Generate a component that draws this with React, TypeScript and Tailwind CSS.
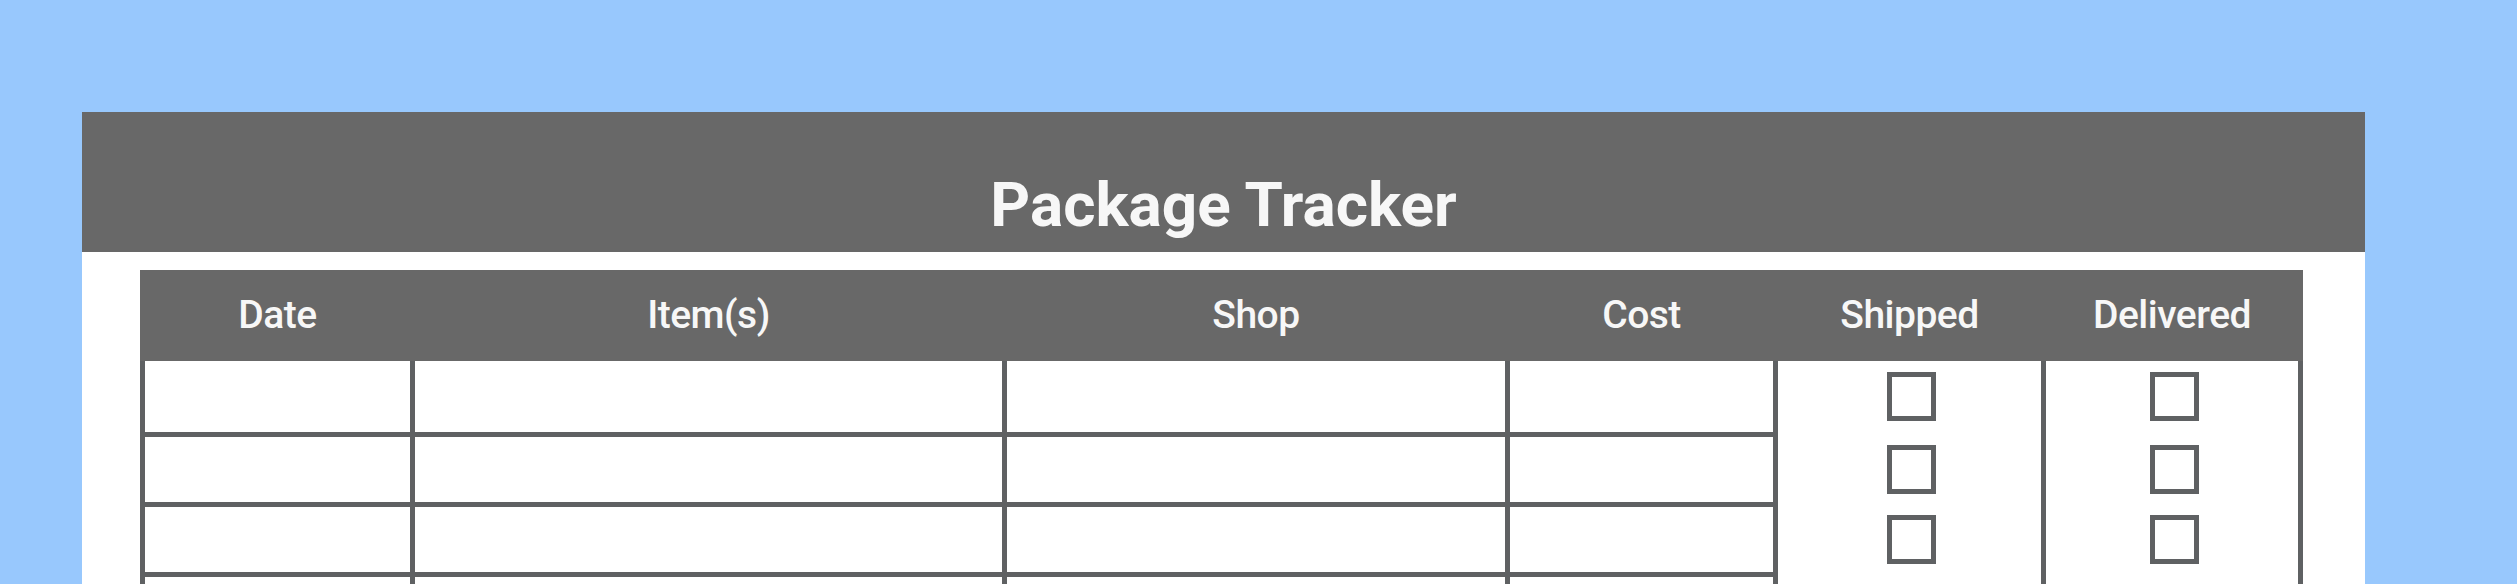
const columns = ['Date', 'Item(s)', 'Shop', 'Cost', 'Shipped', 'Delivered']

const rows = [0, 1, 2, 3, 4]

const Checkbox = () => (
    <div className="w-[49px] h-[49px] border-[5px] border-[#5f6163] bg-white"></div>
)

const App = () => {
    return (
        <div className="w-full h-[584px] overflow-hidden bg-[#98c8fd] pt-[112px] pl-[82px] font-['Roboto',sans-serif]">
            <div className="w-[2283px] h-[600px] bg-white">
                <div className="h-[140px] bg-[#686868] pt-[62px] text-center">
                    <p className="text-[62px] leading-none font-bold text-[#f7f7f7]">Package Tracker</p>
                </div>
                <div className="ml-[58px] mt-[18px] w-[2163px]">
                    <div className="h-[91px] bg-[#686868] pl-[5px] grid grid-cols-[270px_592px_503px_268px_268px_257px]">
                        {columns.map(c => (
                            <div key={c} className="flex items-center justify-center pr-[5px]">
                                <p className="text-[39px] leading-none font-medium tracking-[-0.5px] text-[#f7f7f7]">{c}</p>
                            </div>
                        ))}
                    </div>
                    <div className="border-l-[5px] border-[#5f6163]">
                        {rows.map(r => (
                            <div
                                key={r}
                                className={`grid grid-cols-[270px_592px_503px_268px_268px_257px] ${r === 0 ? 'h-[76px]' : 'h-[70px]'}`}
                            >
                                <div className="border-r-[5px] border-b-[5px] border-[#5f6163]"></div>
                                <div className="border-r-[5px] border-b-[5px] border-[#5f6163]"></div>
                                <div className="border-r-[5px] border-b-[5px] border-[#5f6163]"></div>
                                <div className="border-r-[5px] border-b-[5px] border-[#5f6163]"></div>
                                <div className="border-r-[5px] border-[#5f6163] pb-[5px] pl-[4px] flex items-center justify-center">
                                    <Checkbox />
                                </div>
                                <div className="border-r-[5px] border-[#5f6163] pb-[5px] pl-[4px] flex items-center justify-center">
                                    <Checkbox />
                                </div>
                            </div>
                        ))}
                    </div>
                </div>
            </div>
        </div>
    )
}

export default App
